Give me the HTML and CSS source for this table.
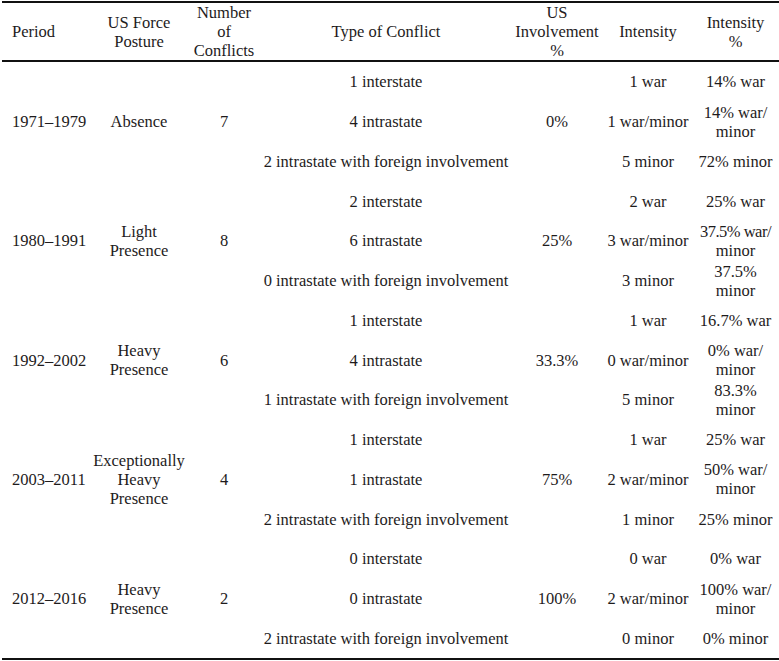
FILE: index.html
```html
<!DOCTYPE html>
<html lang="en">
<head>
<meta charset="utf-8">
<title>US Force Posture and Conflicts</title>
<link rel="stylesheet" href="styles.css">
</head>
<body>
<table class="data">
  <colgroup>
    <col class="c1"><col class="c2"><col class="c3"><col class="c4"><col class="c5"><col class="c6"><col class="c7">
  </colgroup>
  <thead>
    <tr>
      <th class="left">Period</th>
      <th>US Force<br>Posture</th>
      <th>Number<br>of<br>Conflicts</th>
      <th>Type of Conflict</th>
      <th>US<br>Involvement<br>%</th>
      <th>Intensity</th>
      <th>Intensity<br>%</th>
    </tr>
  </thead>
  <tbody>
    <tr>
      <td class="left" rowspan="3">1971–1979</td>
      <td rowspan="3">Absence</td>
      <td rowspan="3">7</td>
      <td class="type">1 interstate</td>
      <td rowspan="3">0%</td>
      <td>1 war</td>
      <td>14% war</td>
    </tr>
    <tr><td class="type">4 intrastate</td><td>1 war/minor</td><td>14% war/<br>minor</td></tr>
    <tr><td class="type">2 intrastate with foreign involvement</td><td>5 minor</td><td>72% minor</td></tr>

    <tr>
      <td class="left" rowspan="3">1980–1991</td>
      <td rowspan="3">Light<br>Presence</td>
      <td rowspan="3">8</td>
      <td class="type">2 interstate</td>
      <td rowspan="3">25%</td>
      <td>2 war</td>
      <td>25% war</td>
    </tr>
    <tr><td class="type">6 intrastate</td><td>3 war/minor</td><td><span class="tight">37.5% war/</span><br>minor</td></tr>
    <tr><td class="type">0 intrastate with foreign involvement</td><td>3 minor</td><td>37.5%<br>minor</td></tr>

    <tr>
      <td class="left" rowspan="3">1992–2002</td>
      <td rowspan="3">Heavy<br>Presence</td>
      <td rowspan="3">6</td>
      <td class="type">1 interstate</td>
      <td rowspan="3">33.3%</td>
      <td>1 war</td>
      <td>16.7% war</td>
    </tr>
    <tr><td class="type">4 intrastate</td><td>0 war/minor</td><td>0% war/<br>minor</td></tr>
    <tr><td class="type">1 intrastate with foreign involvement</td><td>5 minor</td><td>83.3%<br>minor</td></tr>

    <tr>
      <td class="left" rowspan="3">2003–2011</td>
      <td rowspan="3">Exceptionally<br>Heavy<br>Presence</td>
      <td rowspan="3">4</td>
      <td class="type">1 interstate</td>
      <td rowspan="3">75%</td>
      <td>1 war</td>
      <td>25% war</td>
    </tr>
    <tr><td class="type">1 intrastate</td><td>2 war/minor</td><td>50% war/<br>minor</td></tr>
    <tr><td class="type">2 intrastate with foreign involvement</td><td>1 minor</td><td>25% minor</td></tr>

    <tr>
      <td class="left" rowspan="3">2012–2016</td>
      <td rowspan="3">Heavy<br>Presence</td>
      <td rowspan="3">2</td>
      <td class="type">0 interstate</td>
      <td rowspan="3">100%</td>
      <td>0 war</td>
      <td>0% war</td>
    </tr>
    <tr><td class="type">0 intrastate</td><td>2 war/minor</td><td>100% war/<br>minor</td></tr>
    <tr><td class="type">2 intrastate with foreign involvement</td><td>0 minor</td><td>0% minor</td></tr>
  </tbody>
</table>
</body>
</html>
```

FILE: styles.css
```css
html, body {
  margin: 0;
  padding: 0;
  background: #ffffff;
}

body {
  padding: 1px 0 0 2px;
  font-family: "Liberation Serif", "Times New Roman", serif;
  font-size: 16.5px;
  line-height: 19px;
  color: #1e1b1c;
}

.data {
  width: 777px;
  border-collapse: collapse;
  table-layout: fixed;
  border-top: 2px solid #111;
  border-bottom: 2px solid #111;
}

.c1 { width: 90px; }
.c2 { width: 94px; }
.c3 { width: 76px; }
.c4 { width: 248px; }
.c5 { width: 94px; }
.c6 { width: 88px; }
.c7 { width: 87px; }

.data th {
  font-weight: normal;
  height: 57px;
  padding: 0;
  text-align: center;
  vertical-align: middle;
  border-bottom: 2px solid #111;
}

.data td {
  padding: 0;
  height: 39.75px;
  text-align: center;
  vertical-align: middle;
}

.data .left {
  text-align: left;
  padding-left: 10px;
}

.data .type {
  white-space: nowrap;
}

.tight {
  letter-spacing: -0.5px;
}
```
